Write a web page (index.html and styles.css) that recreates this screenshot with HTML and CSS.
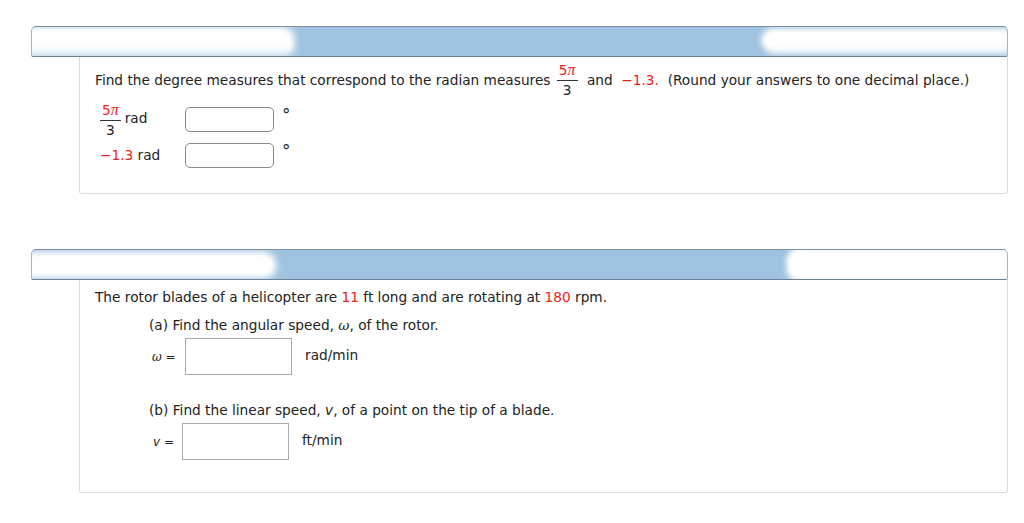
FILE: index.html
```html
<!DOCTYPE html>
<html>
<head>
<meta charset="utf-8">
<link rel="stylesheet" href="styles.css">
</head>
<body>
<div class="page">
  <section class="panel panel-one">
    <div class="panel-head">
      <span class="blob blob-left"></span>
      <span class="blob blob-right"></span>
    </div>
    <div class="panel-body body-one">
      <p class="question">Find the degree measures that correspond to the radian measures <span class="frac"><span class="num"><span class="red">5</span><span class="pi">π</span></span><span class="den">3</span></span> and&nbsp; <span class="red">−1.3.</span>&nbsp; (Round your answers to one decimal place.)</p>
      <div class="deg-row">
        <div class="deg-label"><span class="frac frac-small"><span class="num"><span class="red">5</span><span class="pi">π</span></span><span class="den">3</span></span><span class="rad">rad</span></div>
        <span class="round-input"></span>
        <span class="degree">°</span>
      </div>
      <div class="deg-row">
        <div class="deg-label"><span class="red">−1.3</span>&nbsp;rad</div>
        <span class="round-input"></span>
        <span class="degree">°</span>
      </div>
    </div>
  </section>

  <section class="panel panel-two">
    <div class="panel-head">
      <span class="blob blob-left2"></span>
      <span class="blob blob-right2"></span>
    </div>
    <div class="panel-body body-two">
      <p class="line">The rotor blades of a helicopter are <span class="red">11</span> ft long and are rotating at <span class="red">180</span> rpm.</p>
      <p class="line sub">(a) Find the angular speed, <span class="omega">ω</span>, of the rotor.</p>
      <div class="ans-row ans-a">
        <span class="var"><span class="omega">ω</span> =</span>
        <span class="box-input"></span>
        <span class="unit">rad/min</span>
      </div>
      <p class="line sub sub-b">(b) Find the linear speed, <span class="v">v</span>, of a point on the tip of a blade.</p>
      <div class="ans-row ans-b">
        <span class="var"><span class="v">v</span> =</span>
        <span class="box-input"></span>
        <span class="unit">ft/min</span>
      </div>
    </div>
  </section>
</div>
</body>
</html>
```

FILE: styles.css
```css
* { box-sizing: border-box; }

html, body {
  margin: 0;
  padding: 0;
  background: #ffffff;
}

body {
  font-family: "DejaVu Sans", Verdana, sans-serif;
  font-size: 13.7px;
  color: #222222;
}

.page {
  padding-top: 26px;
  padding-left: 31px;
  width: 1008px;
}

.panel { width: 977px; }

.panel-two { margin-top: 55px; }

.panel-head {
  position: relative;
  height: 31px;
  background: #9ec2df;
  border: 1px solid #a9b6c2;
  border-top-color: #7f8f9f;
  border-bottom-color: #6c8298;
  border-radius: 5px 5px 2px 2px;
  overflow: hidden;
}

.blob {
  position: absolute;
  background: #ffffff;
  filter: blur(2px);
}

.blob-left {
  left: -4px;
  top: 2px;
  width: 264px;
  height: 24px;
  border-radius: 4px 10px 6px 2px;
  background: linear-gradient(#ffffff 70%, #eef4fa);
  box-shadow: 0 0 6px 3px rgba(255,255,255,0.9);
}

.blob-right {
  left: 731px;
  top: 3px;
  width: 246px;
  height: 22px;
  border-radius: 10px 4px 4px 12px;
  background: linear-gradient(#ffffff 70%, #f0f5fa);
  box-shadow: 0 0 5px 2px rgba(255,255,255,0.9);
}

.blob-left2 {
  left: -4px;
  top: 4px;
  width: 246px;
  height: 22px;
  border-radius: 4px 12px 10px 2px;
  box-shadow: 0 0 6px 3px rgba(255,255,255,0.85);
}

.blob-right2 {
  left: 756px;
  top: -2px;
  width: 222px;
  height: 33px;
  border-radius: 14px 4px 4px 14px;
  box-shadow: 0 0 4px 2px rgba(255,255,255,0.9);
}

.panel-body {
  margin-left: 48px;
  border: 1px solid #dadada;
  border-top: none;
  border-radius: 0 0 3px 3px;
  padding-left: 15px;
}

.body-one {
  padding-top: 6px;
  padding-bottom: 20px;
}

.question {
  margin: 0;
  line-height: 18px;
}

.red { color: #ee1c1c; }

.frac {
  display: inline-flex;
  flex-direction: column;
  align-items: center;
  vertical-align: middle;
  line-height: 15px;
  margin: 0 5px 0 2px;
  position: relative;
  top: -1px;
}

.frac .num {
  padding: 0 2px 2px;
  border-bottom: 1px solid #333333;
}

.frac .den { padding-top: 2px; }

.pi {
  font-family: "Liberation Serif", "Times New Roman", serif;
  font-style: italic;
  font-size: 16px;
  color: #ee1c1c;
}

.deg-row {
  display: flex;
  align-items: center;
  height: 36px;
  padding-left: 5px;
}

.body-one .question + .deg-row { margin-top: 2px; }

.deg-label {
  width: 85px;
  display: flex;
  align-items: center;
  white-space: nowrap;
}

.frac-small {
  margin: 0 4px 0 0;
  top: 1px;
}

.rad {
  position: relative;
  top: -1px;
}

.round-input {
  display: block;
  width: 89px;
  height: 25px;
  border: 1px solid #8a8a8a;
  border-radius: 5px;
  background: #ffffff;
}

.degree {
  margin-left: 8px;
  font-size: 17px;
  position: relative;
  top: -4px;
}

.body-two {
  padding-top: 8px;
  padding-bottom: 32px;
}

.line {
  margin: 0;
  line-height: 18px;
}

.sub {
  margin-top: 10px;
  padding-left: 54px;
}

.sub-b { margin-top: 26px; }

.omega {
  font-family: "DejaVu Serif", "Liberation Serif", serif;
  font-style: italic;
}

.v {
  font-style: italic;
}

.ans-row {
  display: flex;
  align-items: center;
  margin-top: 4px;
  padding-left: 57px;
}

.ans-b { padding-left: 58px; margin-top: 4px; }

.var {
  font-size: 12px;
  width: 33px;
}

.ans-b .var { width: 29px; }

.box-input {
  display: block;
  width: 107px;
  height: 37px;
  border: 1px solid #a9a9a9;
  background: #ffffff;
}

.unit {
  margin-left: 13px;
  position: relative;
  top: -2px;
}
```
